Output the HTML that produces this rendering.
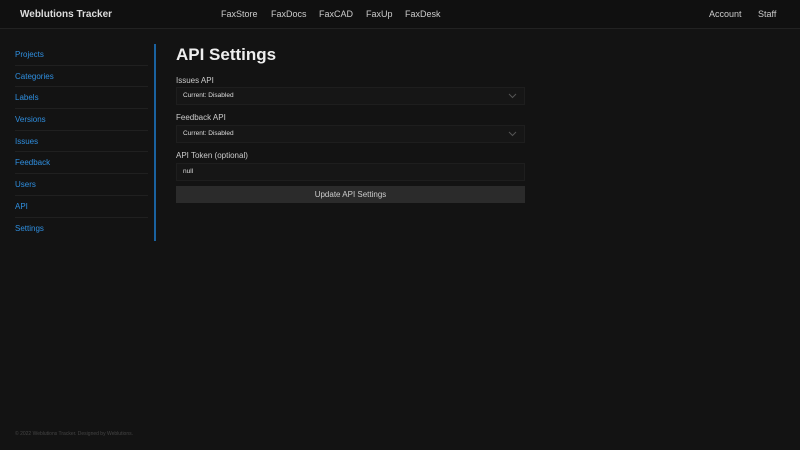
<!DOCTYPE html>
<html><head><style>
*{margin:0;padding:0;box-sizing:border-box}
body{width:800px;height:450px;background:#131313;font-family:"Liberation Sans",sans-serif;color:#ddd;position:relative;overflow:hidden}
.hdr{position:absolute;left:0;top:0;width:800px;height:29px;background:#101010;border-bottom:1px solid #222}
.hdr span{position:absolute;top:9px;font-size:9px;color:#ccc}
.brand{left:20px;font-weight:bold;font-size:10px!important;color:#ddd!important;top:9px!important}
.side{position:absolute;left:15px;top:44px;width:141px;height:197px;border-right:2px solid #1a62a0}
.side div{height:21.7px;line-height:21px;font-size:8px;color:#2f8fe0;border-bottom:1px solid #202020;width:133px}
h1{position:absolute;left:176px;top:45px;font-size:17px;color:#eee}
.lbl{position:absolute;left:176px;font-size:8px;color:#ccc}
.box{position:absolute;left:176px;width:349px;height:18px;background:#161616;border:1px solid #1e1e1e;font-size:6.5px;color:#ddd;padding-left:6px;line-height:16px}
.box svg{position:absolute;right:7px;top:5px}
.btn{position:absolute;left:176px;top:186px;width:349px;height:17px;background:#2b2b2b;font-size:8px;color:#ccc;text-align:center;line-height:17px}
.foot{position:absolute;left:15px;top:431px;font-size:5px;color:#444}
</style></head><body>
<div class="hdr">
<span class="brand">Weblutions Tracker</span>
<span style="left:221px">FaxStore</span><span style="left:271px">FaxDocs</span><span style="left:319px">FaxCAD</span><span style="left:366px">FaxUp</span><span style="left:405px">FaxDesk</span>
<span style="left:709px">Account</span><span style="left:758px">Staff</span>
</div>
<div class="side"><div>Projects</div><div>Categories</div><div>Labels</div><div>Versions</div><div>Issues</div><div>Feedback</div><div>Users</div><div>API</div><div style="border:none">Settings</div></div>
<h1>API Settings</h1>
<div class="lbl" style="top:76px">Issues API</div>
<div class="box" style="top:87px">Current: Disabled<svg width="9" height="6"><path d="M1 1l3.5 3.5L8 1" stroke="#555" fill="none"/></svg></div>
<div class="lbl" style="top:113px">Feedback API</div>
<div class="box" style="top:125px">Current: Disabled<svg width="9" height="6"><path d="M1 1l3.5 3.5L8 1" stroke="#555" fill="none"/></svg></div>
<div class="lbl" style="top:151px">API Token (optional)</div>
<div class="box" style="top:163px">null</div>
<div class="btn">Update API Settings</div>
<div class="foot">© 2022 Weblutions Tracker. Designed by Weblutions.</div>
</body></html>
